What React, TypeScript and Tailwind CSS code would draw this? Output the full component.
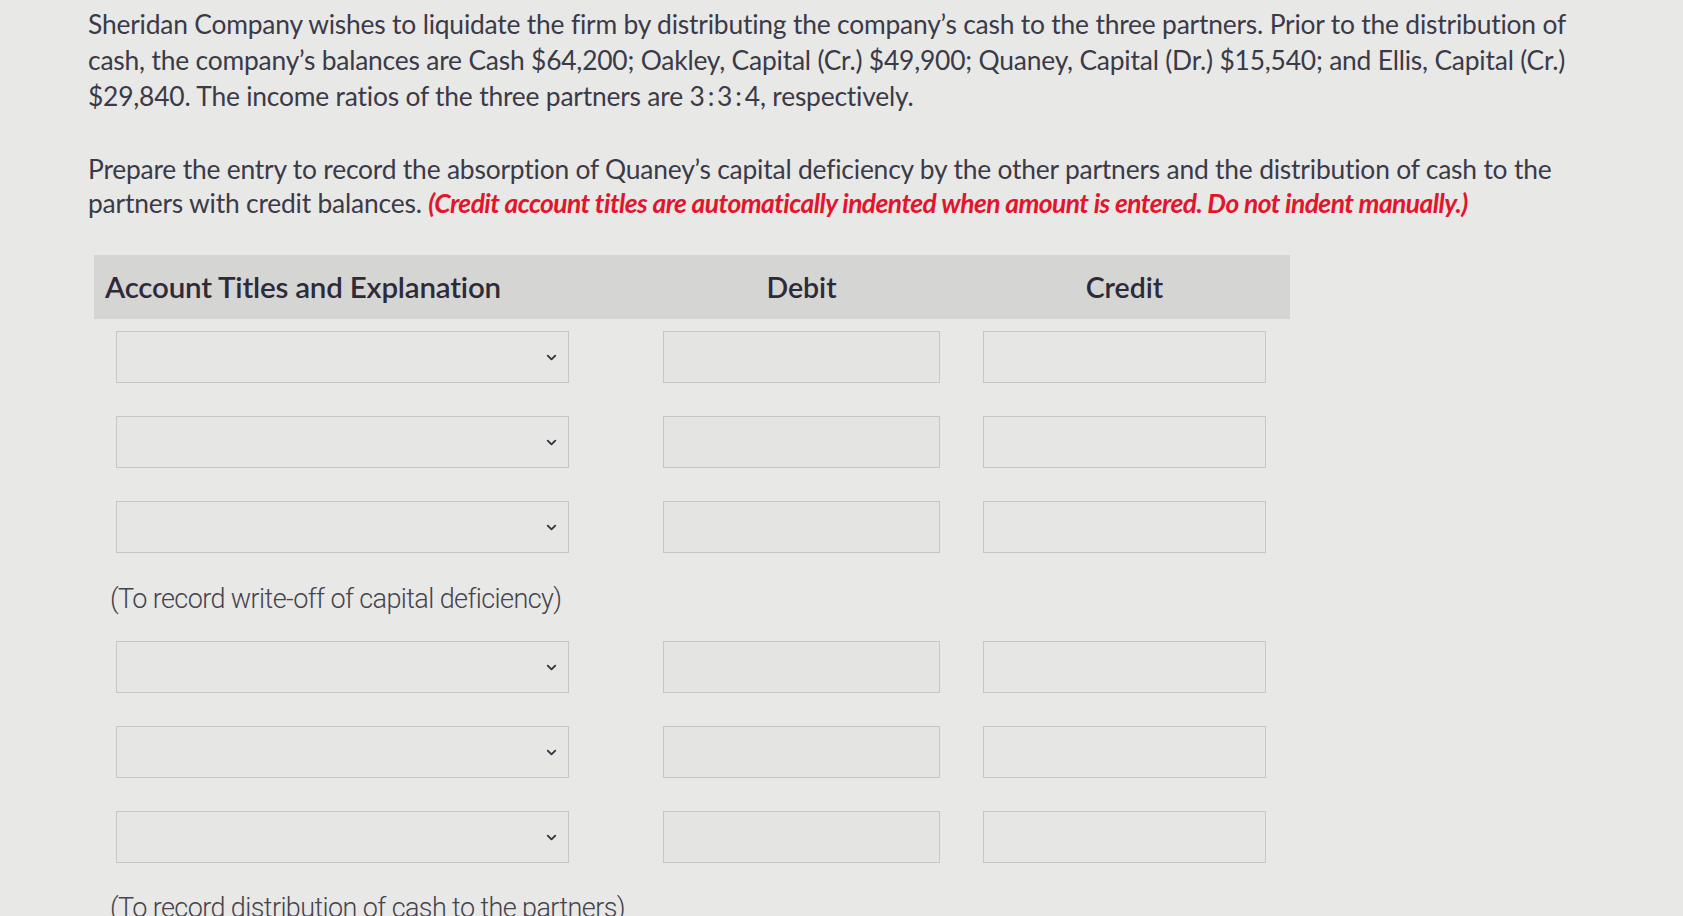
import { ChevronDown } from "lucide-react";

type Row = { id: number };

const firstEntry: Row[] = [{ id: 1 }, { id: 2 }, { id: 3 }];
const secondEntry: Row[] = [{ id: 4 }, { id: 5 }, { id: 6 }];

function EntryRow() {
  return (
    <div className="grid grid-cols-[526px_277px_283px] gap-x-[43px] h-[85px] items-start pt-[4px]">
      <div className="pl-[22px]">
        <div className="h-[52px] w-[453px] border border-[#c6c6c6] bg-[#e6e6e4] flex items-center justify-end pr-[9px]">
          <ChevronDown className="w-[15px] h-[15px] text-[#3a3340]" strokeWidth={3} />
        </div>
      </div>
      <div className="h-[52px] border border-[#c6c6c6] bg-[#e4e4e2]" />
      <div className="h-[52px] border border-[#c6c6c6] bg-[#e6e6e4]" />
    </div>
  );
}

export default function App() {
  return (
    <main className="min-h-screen w-full bg-[#e8e8e6] text-[#3b3a48] font-['Lato','Liberation_Sans',sans-serif] overflow-hidden">
      <div className="pl-[88px] pt-[6px]">
        <p className="text-[26.4px] leading-[36px] tracking-[-0.2px] w-[1530px]">
          Sheridan Company wishes to liquidate the firm by distributing the company’s cash to the three partners. Prior to the distribution of cash, the company’s balances are Cash $64,200; Oakley, Capital (Cr.) $49,900; Quaney, Capital (Dr.) $15,540; and Ellis, Capital (Cr.) $29,840. The income ratios of the three partners are 3&thinsp;:&thinsp;3&thinsp;:&thinsp;4, respectively.
        </p>
        <p className="mt-[38px] text-[26.4px] leading-[34px] tracking-[-0.2px] w-[1530px]">
          Prepare the entry to record the absorption of Quaney’s capital deficiency by the other partners and the distribution of cash to the partners with credit balances.{" "}
          <span className="text-[#e3142c] font-bold italic tracking-[-0.55px]">
            (Credit account titles are automatically indented when amount is entered. Do not indent manually.)
          </span>
        </p>

        <div className="mt-[35px] ml-[6px] w-[1196px]">
          <div className="grid grid-cols-[526px_277px_283px] gap-x-[43px] h-[64px] items-center bg-[#d5d5d4]">
            <div className="pl-[11px] text-[29.5px] font-semibold tracking-[-0.2px] text-[#2e2a38]">Account Titles and Explanation</div>
            <div className="text-center text-[28.5px] font-semibold text-[#2e2a38]">Debit</div>
            <div className="text-center text-[28.5px] font-semibold text-[#2e2a38]">Credit</div>
          </div>
          <div className="pt-[8px]">
            {firstEntry.map((r) => (
              <EntryRow key={r.id} />
            ))}
          </div>
          <div className="pl-[16px] -mt-[3px] h-[56px] text-[27px] font-['Roboto','Liberation_Sans',sans-serif] font-light tracking-[-0.6px] text-[#45434d]">
            (To record write-off of capital deficiency)
          </div>
          <div className="pt-[2px]">
            {secondEntry.map((r) => (
              <EntryRow key={r.id} />
            ))}
          </div>
          <div className="pl-[16px] -mt-[4px] text-[27px] font-['Roboto','Liberation_Sans',sans-serif] font-light tracking-[-0.6px] text-[#45434d]">
            (To record distribution of cash to the partners)
          </div>
        </div>
      </div>
    </main>
  );
}
